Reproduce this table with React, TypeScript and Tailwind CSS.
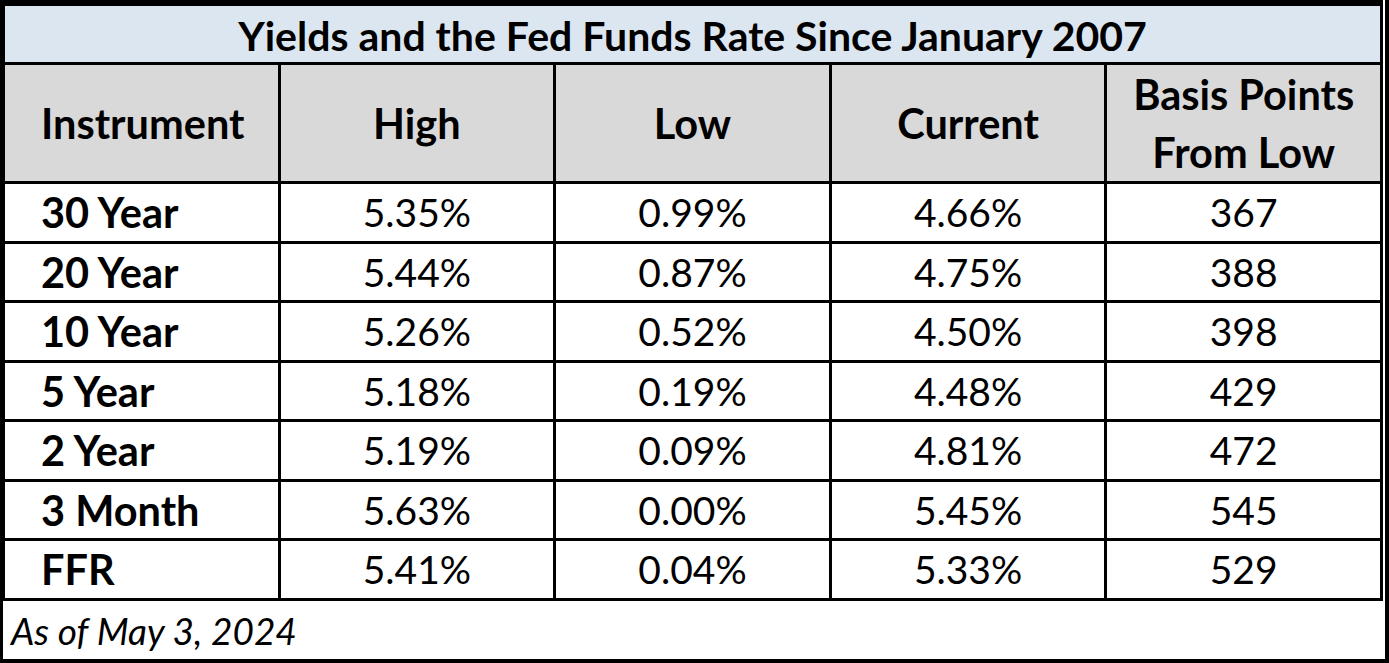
import React from "react";

const rows = [
  { name: "30 Year", high: "5.35%", low: "0.99%", current: "4.66%", bps: "367" },
  { name: "20 Year", high: "5.44%", low: "0.87%", current: "4.75%", bps: "388" },
  { name: "10 Year", high: "5.26%", low: "0.52%", current: "4.50%", bps: "398" },
  { name: "5 Year", high: "5.18%", low: "0.19%", current: "4.48%", bps: "429" },
  { name: "2 Year", high: "5.19%", low: "0.09%", current: "4.81%", bps: "472" },
  { name: "3 Month", high: "5.63%", low: "0.00%", current: "5.45%", bps: "545" },
  { name: "FFR", high: "5.41%", low: "0.04%", current: "5.33%", bps: "529" },
];

export default function App() {
  return (
    <div
      className="w-[1389px] h-[663px] bg-white border-l-[3px] border-r-[4px] border-b-[4px] border-black flex flex-col text-black"
      style={{ fontFamily: "Lato, 'Open Sans', sans-serif" }}
    >
      {/* table */}
      <div className="w-[1380px] bg-black border-t-[6px] border-l-[2px] border-r-[3px] border-b-[3px] border-black flex flex-col gap-[3px]">
        <div className="h-[56px] bg-[#dce6f1] flex items-center justify-center pt-[4px] text-[41px] font-bold">
          Yields and the Fed Funds Rate Since January 2007
        </div>

        <div className="grid grid-cols-5 gap-[3px]">
          <div className="h-[116px] bg-[#d9d9d9] flex items-center pl-[36px] text-[41.5px] font-bold">
            Instrument
          </div>
          <div className="h-[116px] bg-[#d9d9d9] flex items-center justify-center text-[41.5px] font-bold">
            High
          </div>
          <div className="h-[116px] bg-[#d9d9d9] flex items-center justify-center text-[41.5px] font-bold">
            Low
          </div>
          <div className="h-[116px] bg-[#d9d9d9] flex items-center justify-center text-[41.5px] font-bold">
            Current
          </div>
          <div className="h-[116px] bg-[#d9d9d9] flex flex-col items-center justify-center text-[41.5px] font-bold leading-[58px]">
            <span>Basis Points</span>
            <span>From Low</span>
          </div>

          {rows.map((r) => (
            <React.Fragment key={r.name}>
              <div className="h-[56.5px] bg-white flex items-center pl-[36px] text-[41.5px] font-bold">
                {r.name}
              </div>
              <div className="h-[56.5px] bg-white flex items-center justify-center text-[39px]">
                {r.high}
              </div>
              <div className="h-[56.5px] bg-white flex items-center justify-center text-[39px]">
                {r.low}
              </div>
              <div className="h-[56.5px] bg-white flex items-center justify-center text-[39px]">
                {r.current}
              </div>
              <div className="h-[56.5px] bg-white flex items-center justify-center text-[39px]">
                {r.bps}
              </div>
            </React.Fragment>
          ))}
        </div>
      </div>

      {/* footnote */}
      <div className="flex-1 flex items-center pl-[8px] pt-[2px] text-[37px] italic">
        As of May 3, 2024
      </div>
    </div>
  );
}
